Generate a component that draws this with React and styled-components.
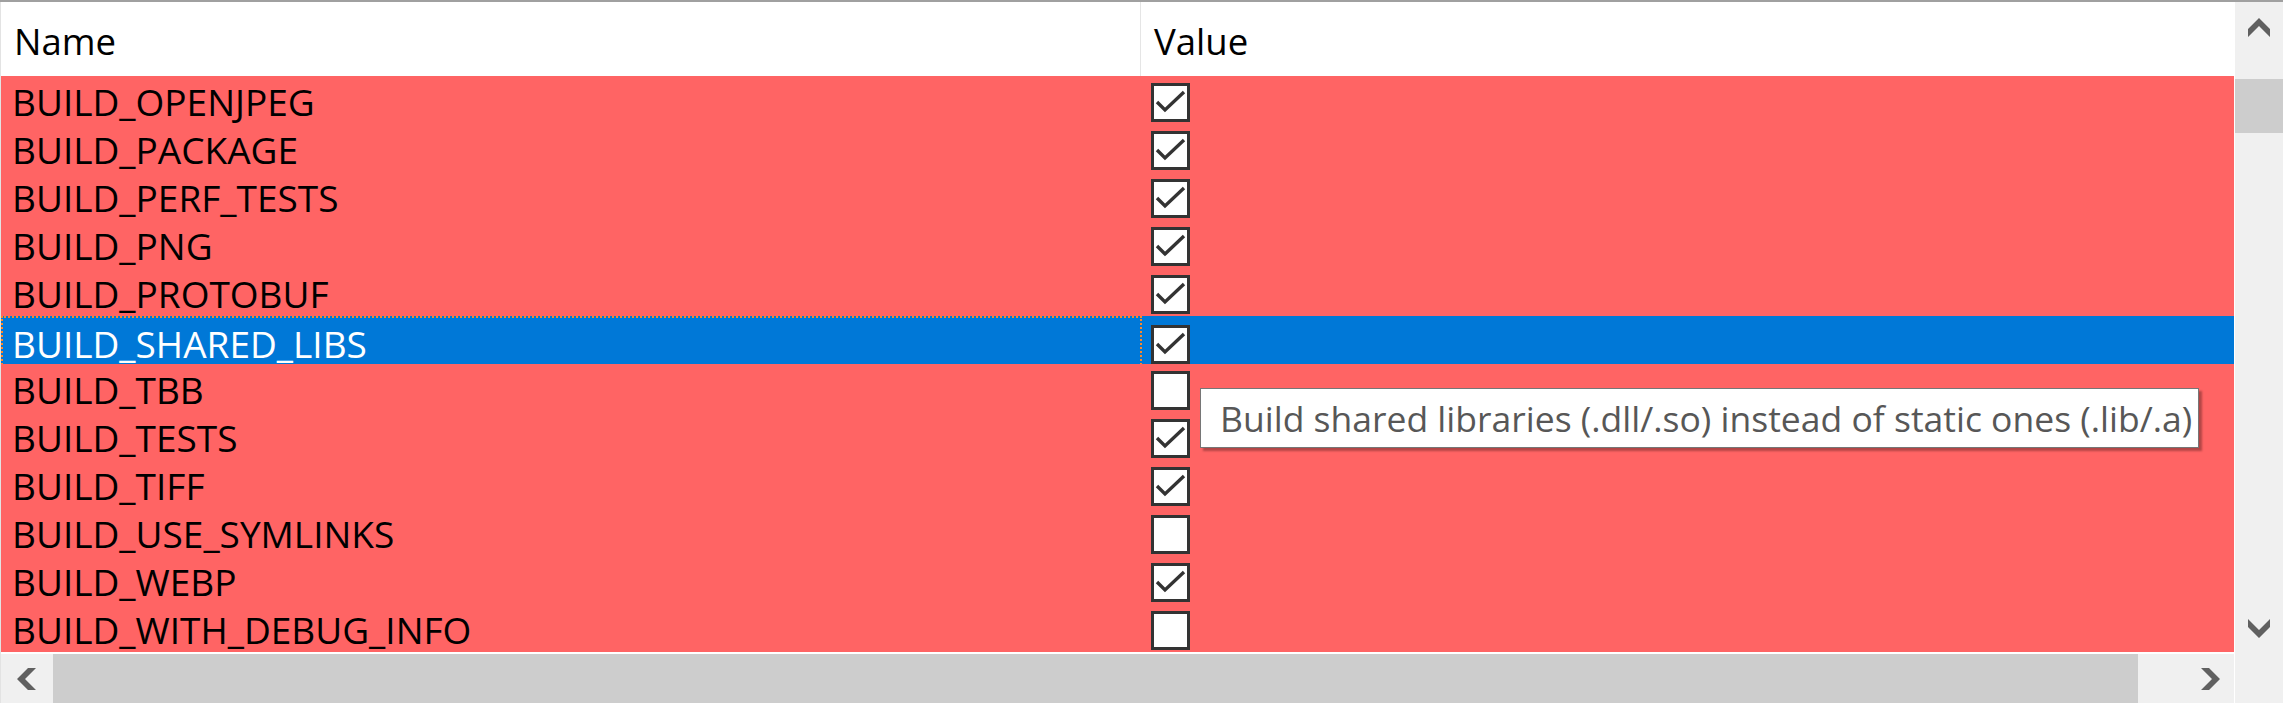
import React from 'react';
import styled, { createGlobalStyle } from 'styled-components';

const GlobalStyle = createGlobalStyle`
  html, body {
    margin: 0;
    padding: 0;
    background: #ffffff;
    overflow: hidden;
  }
  body {
    font-family: 'Open Sans', 'Noto Sans', sans-serif;
  }
`;

const entries = [
  { name: 'BUILD_OPENJPEG', checked: true },
  { name: 'BUILD_PACKAGE', checked: true },
  { name: 'BUILD_PERF_TESTS', checked: true },
  { name: 'BUILD_PNG', checked: true },
  { name: 'BUILD_PROTOBUF', checked: true },
  { name: 'BUILD_SHARED_LIBS', checked: true, selected: true },
  { name: 'BUILD_TBB', checked: false },
  { name: 'BUILD_TESTS', checked: true },
  { name: 'BUILD_TIFF', checked: true },
  { name: 'BUILD_USE_SYMLINKS', checked: false },
  { name: 'BUILD_WEBP', checked: true },
  { name: 'BUILD_WITH_DEBUG_INFO', checked: false },
];

const Frame = styled.div`
  position: relative;
  width: 2283px;
  height: 703px;
  border-top: 2px solid #a0a0a0;
  box-sizing: border-box;
  display: flex;
  background: #ffffff;
`;

const Pane = styled.div`
  width: 2235px;
  display: flex;
  flex-direction: column;
  border-left: 1px solid #e3e3e3;
  border-right: 1px solid #ffffff;
  box-sizing: border-box;
`;

const Table = styled.div`
  flex: 1;
  display: flex;
  flex-direction: column;
  border-bottom: 1px solid #ffffff;
`;

const HeaderRow = styled.div`
  height: 74px;
  display: grid;
  grid-template-columns: 1140px 1fr;
  background: #ffffff;
`;

const HeaderCell = styled.div`
  display: flex;
  align-items: center;
  padding-left: ${({ $indent }) => $indent}px;
  padding-top: 4px;
  font-size: 36.5px;
  color: #000000;
  border-right: ${({ $divider }) => ($divider ? '1px solid #e5e5e5' : 'none')};
`;

const Row = styled.div`
  height: 48px;
  display: grid;
  grid-template-columns: 1141px 1fr;
  background: ${({ $selected }) => ($selected ? '#0078d7' : '#ff6464')};
  color: ${({ $selected }) => ($selected ? '#ffffff' : '#000000')};
`;

const NameCell = styled.div`
  display: flex;
  align-items: center;
  padding-left: ${({ $focused }) => ($focused ? 9 : 11)}px;
  padding-bottom: 2px;
  font-size: 37px;
  white-space: nowrap;
  border: ${({ $focused }) => ($focused ? '2px dotted #ff8728' : 'none')};
  box-sizing: border-box;
`;

const ValueCell = styled.div`
  display: flex;
  align-items: center;
  padding-left: 9px;
`;

const Box = styled.div`
  width: 39px;
  height: 39px;
  box-sizing: border-box;
  border: 3px solid #333333;
  background: #ffffff;
  display: flex;
`;

const HScrollBar = styled.div`
  height: 49px;
  display: flex;
  background: #f0f0f0;
`;

const VScrollBar = styled.div`
  width: 48px;
  display: flex;
  flex-direction: column;
  background: #f0f0f0;
`;

const ArrowButton = styled.div`
  flex: 0 0 ${({ $size }) => $size}px;
  display: flex;
  align-items: center;
  justify-content: center;
  color: #606060;
`;

const Track = styled.div`
  flex: 1;
  display: flex;
  flex-direction: ${({ $vertical }) => ($vertical ? 'column' : 'row')};
`;

const Thumb = styled.div`
  background: #cdcdcd;
  flex: 0 0 ${({ $length }) => $length}px;
  margin-top: ${({ $offset }) => $offset || 0}px;
`;

const Corner = styled.div`
  flex: 0 0 50px;
`;

const Tooltip = styled.div`
  position: absolute;
  left: 1200px;
  top: 386px;
  width: 999px;
  height: 60px;
  box-sizing: border-box;
  border: 1px solid #767676;
  background: #ffffff;
  box-shadow: 3px 3px 2px rgba(0, 0, 0, 0.3);
  display: flex;
  align-items: center;
  padding-left: 19px;
  font-size: 35.5px;
  color: #575757;
  white-space: nowrap;
`;

const Check = () => (
  <svg width="33" height="33" viewBox="0 0 33 33">
    <polyline points="3,16 11,24 30,6" fill="none" stroke="#333333" strokeWidth="3.4" />
  </svg>
);

const Chevron = ({ dir }) => {
  const rot = { up: 0, right: 90, down: 180, left: 270 }[dir];
  return (
    <svg width="22" height="22" viewBox="0 0 22 22" style={{ transform: `rotate(${rot}deg)` }}>
      <polygon points="0,12 11,1 22,12 22,20 11,9 0,20" fill="currentColor" />
    </svg>
  );
};

export default function App() {
  return (
    <>
      <GlobalStyle />
      <Frame>
        <Pane>
          <Table>
            <HeaderRow>
              <HeaderCell $indent={13} $divider>Name</HeaderCell>
              <HeaderCell $indent={13}>Value</HeaderCell>
            </HeaderRow>
            {entries.map((e) => (
              <Row key={e.name} $selected={e.selected}>
                <NameCell $focused={e.selected}>{e.name}</NameCell>
                <ValueCell>
                  <Box>{e.checked && <Check />}</Box>
                </ValueCell>
              </Row>
            ))}
          </Table>
          <HScrollBar>
            <ArrowButton $size={52}>
              <Chevron dir="left" />
            </ArrowButton>
            <Track>
              <Thumb $length={2085} />
            </Track>
            <ArrowButton $size={49}>
              <Chevron dir="right" />
            </ArrowButton>
          </HScrollBar>
        </Pane>
        <VScrollBar>
          <ArrowButton $size={51}>
            <Chevron dir="up" />
          </ArrowButton>
          <Track $vertical>
            <Thumb $length={54} $offset={26} />
          </Track>
          <ArrowButton $size={50}>
            <Chevron dir="down" />
          </ArrowButton>
          <Corner />
        </VScrollBar>
        <Tooltip>Build shared libraries (.dll/.so) instead of static ones (.lib/.a)</Tooltip>
      </Frame>
    </>
  );
}
